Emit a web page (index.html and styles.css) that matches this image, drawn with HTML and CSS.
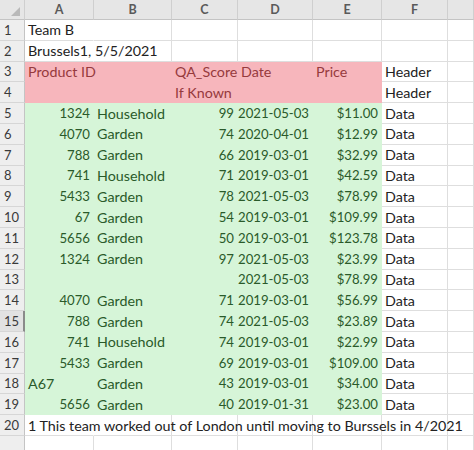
FILE: index.html
```html
<!DOCTYPE html>
<html>
<head>
<meta charset="utf-8">
<link rel="stylesheet" href="styles.css">
</head>
<body>
<div class="sheet">
  <div class="hd corner"><span class="tri"></span></div>
  <div class="hd">A</div><div class="hd">B</div><div class="hd">C</div><div class="hd">D</div><div class="hd">E</div><div class="hd">F</div><div class="hd"></div>

  <div class="rn">1</div><div class="c ov">Team B</div><div class="c"></div><div class="c"></div><div class="c"></div><div class="c"></div><div class="c"></div><div class="c"></div>
  <div class="rn">2</div><div class="c ov">Brussels1, 5/5/2021</div><div class="c"></div><div class="c"></div><div class="c"></div><div class="c"></div><div class="c"></div><div class="c"></div>
  <div class="rn">3</div><div class="c bad ov">Product ID</div><div class="c bad"></div><div class="c bad">QA_Score</div><div class="c bad">Date</div><div class="c bad">Price</div><div class="c">Header</div><div class="c"></div>
  <div class="rn">4</div><div class="c bad"></div><div class="c bad"></div><div class="c bad">If Known</div><div class="c bad"></div><div class="c bad"></div><div class="c">Header</div><div class="c"></div>

  <div class="rn">5</div><div class="c good r">1324</div><div class="c good">Household</div><div class="c good r">99</div><div class="c good r">2021-05-03</div><div class="c good r">$11.00</div><div class="c">Data</div><div class="c"></div>
  <div class="rn">6</div><div class="c good r">4070</div><div class="c good">Garden</div><div class="c good r">74</div><div class="c good r">2020-04-01</div><div class="c good r">$12.99</div><div class="c">Data</div><div class="c"></div>
  <div class="rn">7</div><div class="c good r">788</div><div class="c good">Garden</div><div class="c good r">66</div><div class="c good r">2019-03-01</div><div class="c good r">$32.99</div><div class="c">Data</div><div class="c"></div>
  <div class="rn">8</div><div class="c good r">741</div><div class="c good">Household</div><div class="c good r">71</div><div class="c good r">2019-03-01</div><div class="c good r">$42.59</div><div class="c">Data</div><div class="c"></div>
  <div class="rn">9</div><div class="c good r">5433</div><div class="c good">Garden</div><div class="c good r">78</div><div class="c good r">2021-05-03</div><div class="c good r">$78.99</div><div class="c">Data</div><div class="c"></div>
  <div class="rn">10</div><div class="c good r">67</div><div class="c good">Garden</div><div class="c good r">54</div><div class="c good r">2019-03-01</div><div class="c good r">$109.99</div><div class="c">Data</div><div class="c"></div>
  <div class="rn">11</div><div class="c good r">5656</div><div class="c good">Garden</div><div class="c good r">50</div><div class="c good r">2019-03-01</div><div class="c good r">$123.78</div><div class="c">Data</div><div class="c"></div>
  <div class="rn">12</div><div class="c good r">1324</div><div class="c good">Garden</div><div class="c good r">97</div><div class="c good r">2021-05-03</div><div class="c good r">$23.99</div><div class="c">Data</div><div class="c"></div>
  <div class="rn">13</div><div class="c good r"></div><div class="c good"></div><div class="c good r"></div><div class="c good r">2021-05-03</div><div class="c good r">$78.99</div><div class="c">Data</div><div class="c"></div>
  <div class="rn">14</div><div class="c good r">4070</div><div class="c good">Garden</div><div class="c good r">71</div><div class="c good r">2019-03-01</div><div class="c good r">$56.99</div><div class="c">Data</div><div class="c"></div>
  <div class="rn sel">15</div><div class="c good r">788</div><div class="c good">Garden</div><div class="c good r">74</div><div class="c good r">2021-05-03</div><div class="c good r">$23.89</div><div class="c">Data</div><div class="c"></div>
  <div class="rn">16</div><div class="c good r">741</div><div class="c good">Household</div><div class="c good r">74</div><div class="c good r">2019-03-01</div><div class="c good r">$22.99</div><div class="c">Data</div><div class="c"></div>
  <div class="rn">17</div><div class="c good r">5433</div><div class="c good">Garden</div><div class="c good r">69</div><div class="c good r">2019-03-01</div><div class="c good r">$109.00</div><div class="c">Data</div><div class="c"></div>
  <div class="rn">18</div><div class="c good">A67</div><div class="c good">Garden</div><div class="c good r">43</div><div class="c good r">2019-03-01</div><div class="c good r">$34.00</div><div class="c">Data</div><div class="c"></div>
  <div class="rn">19</div><div class="c good r">5656</div><div class="c good">Garden</div><div class="c good r">40</div><div class="c good r">2019-01-31</div><div class="c good r">$23.00</div><div class="c">Data</div><div class="c"></div>
  <div class="rn">20</div><div class="c ov">1 This team worked out of London until moving to Burssels in 4/2021</div><div class="c"></div><div class="c"></div><div class="c"></div><div class="c"></div><div class="c"></div><div class="c"></div>
  <div class="rn"></div><div class="c"></div><div class="c"></div><div class="c"></div><div class="c"></div><div class="c"></div><div class="c"></div><div class="c"></div>
</div>
</body>
</html>
```
FILE: styles.css
```css
html, body {
  margin: 0;
  padding: 0;
  background: #ffffff;
  overflow: hidden;
}
.sheet {
  display: grid;
  grid-template-columns: 25px 69px 78px 66px 75px 69px 66px 1fr;
  grid-template-rows: 20px repeat(21, 20.8px);
  width: 474px;
  font-family: Lato, "Open Sans", sans-serif;
  font-size: 14.3px;
  color: #222222;
}
.hd {
  background: #e6e6e6;
  border-right: 1px solid #cfcfcf;
  border-bottom: 1px solid #c4c4c4;
  color: #5a5a5a;
  font-weight: 700;
  font-size: 12.5px;
  display: flex;
  align-items: center;
  justify-content: center;
  box-sizing: border-box;
}
.corner {
  position: relative;
  background: #e6e6e6;
}
.tri {
  position: absolute;
  right: 4px;
  bottom: 3px;
  width: 0;
  height: 0;
  border-left: 9px solid transparent;
  border-bottom: 9px solid #b9b9b9;
}
.rn {
  background: #eeeeee;
  border-right: 1px solid #c4c4c4;
  border-bottom: 1px solid #d6d6d6;
  color: #3a3a3a;
  font-size: 13px;
  display: flex;
  align-items: center;
  padding-left: 4px;
  box-sizing: border-box;
}
.sel {
  background: #e2e2e2;
  border-right: 2px solid #8a8a8a;
}
.c {
  border-right: 1px solid #dedede;
  border-bottom: 1px solid #dedede;
  box-sizing: border-box;
  display: flex;
  align-items: center;
  padding: 0 3px;
  white-space: nowrap;
  min-width: 0;
}
.ov {
  overflow: visible;
  border-right-color: transparent;
  position: relative;
  z-index: 1;
}
.r {
  justify-content: flex-end;
  font-size: 13.2px;
}
.bad {
  background: #f7b6bc;
  border-color: #f7b6bc;
  color: #963a3d;
}
.good {
  background: #d6f5d8;
  border-color: #d6f5d8;
  color: #2a5a2a;
}
```
